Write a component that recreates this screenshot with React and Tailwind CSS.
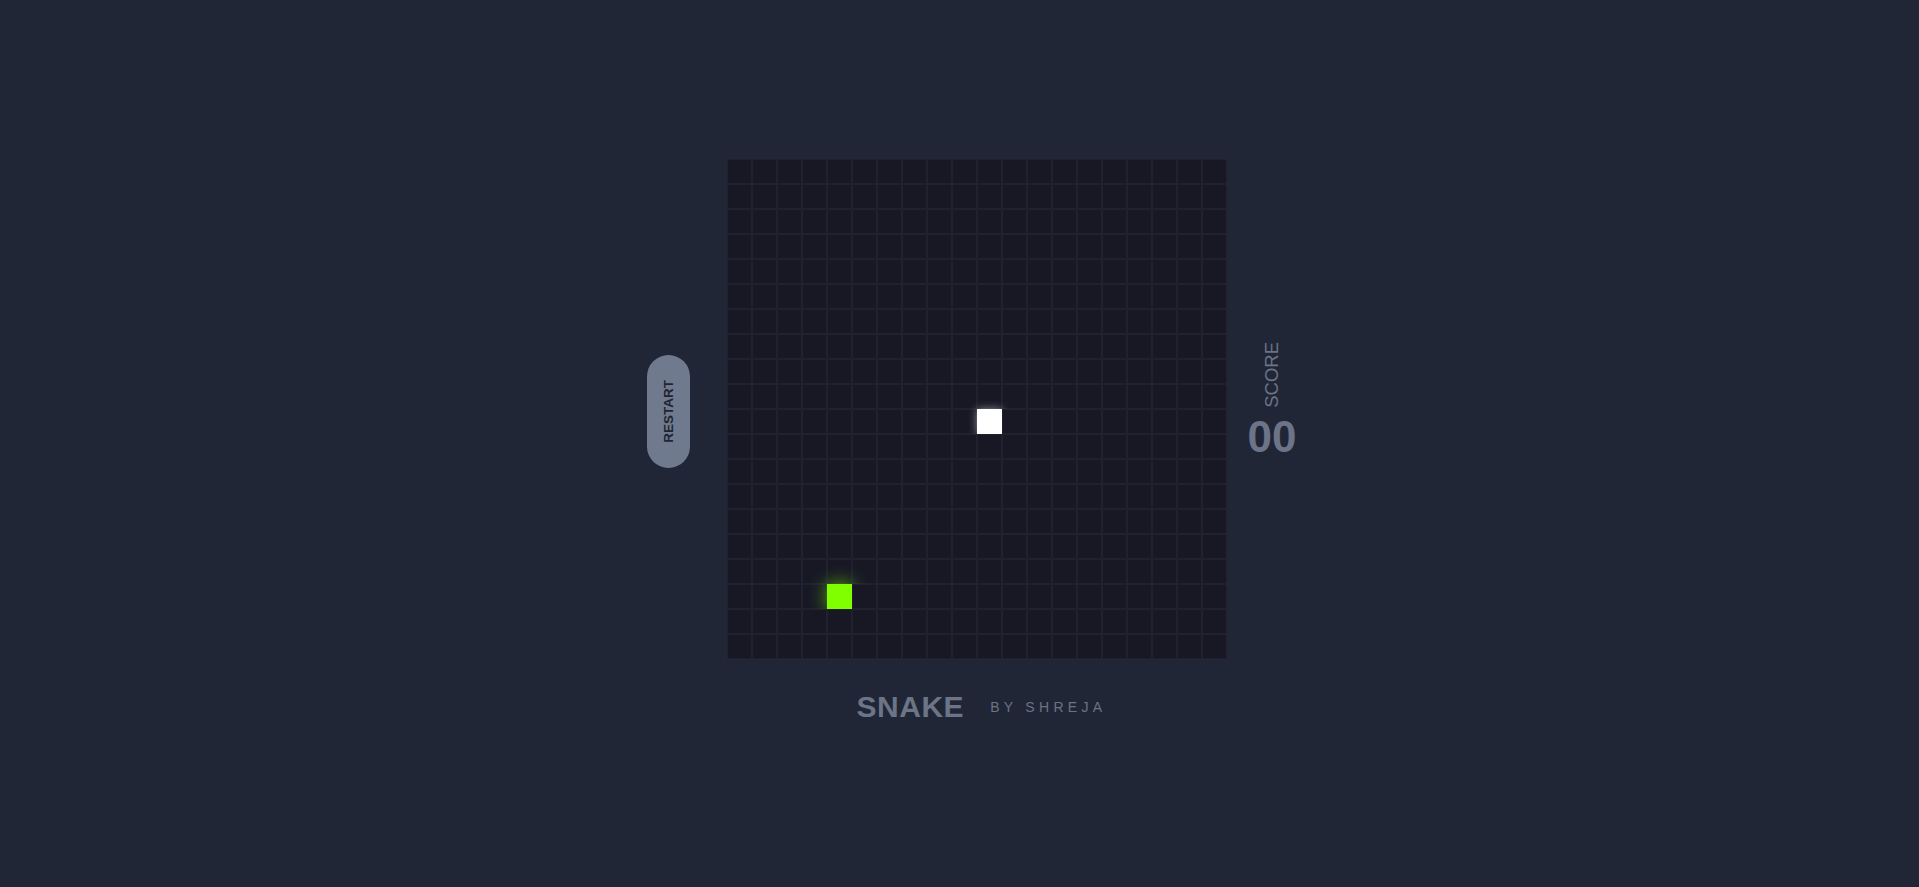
import React from "react";

const COLS = 20;
const ROWS = 20;

function Cell({ type }) {
  if (type === "food") {
    return (
      <div className="w-[25px] h-[25px] bg-white shadow-[0_0_9px_rgba(255,255,255,0.5)]" />
    );
  }
  if (type === "snake") {
    return (
      <div className="w-[25px] h-[25px] bg-[#7fff00] shadow-[0_0_18px_rgba(127,255,0,0.65)]" />
    );
  }
  return <div className="w-[25px] h-[25px] border border-[#20202f] bg-[#181825]" />;
}

export default function App() {
  const cells = [];
  for (let r = 0; r < ROWS; r++) {
    for (let c = 0; c < COLS; c++) {
      let type = "empty";
      if (r === 10 && c === 10) type = "food";
      if (r === 17 && c === 4) type = "snake";
      cells.push(<Cell key={`${r}-${c}`} type={type} />);
    }
  }

  return (
    <div
      className="min-h-screen w-full bg-[#212636] flex items-center justify-center pl-[25px] pb-[5px]"
      style={{ fontFamily: '"Liberation Sans", Arial, Helvetica, sans-serif' }}
    >
      <div className="grid grid-cols-[80px_500px_70px]">
        <div className="self-center justify-self-start mt-[5px]">
          <button className="w-[43px] h-[113px] rounded-full bg-[#707a8e] flex items-center justify-center">
            <span className="[writing-mode:vertical-rl] rotate-180 text-[13.5px] font-bold text-[#1f2433] leading-none">
              RESTART
            </span>
          </button>
        </div>

        <div className="grid grid-cols-[repeat(20,25px)] grid-rows-[repeat(20,25px)] w-[500px] h-[500px] bg-[#181825]">
          {cells}
        </div>

        <div className="self-center justify-self-end w-[50px] flex flex-col items-center mb-[17px]">
          <span className="[writing-mode:vertical-rl] rotate-180 text-[18.5px] text-[#6b7488] leading-none">
            SCORE
          </span>
          <span className="mt-[7px] text-[44px] font-bold text-[#6b7488] leading-none">00</span>
        </div>

        <div />
        <div className="flex items-center justify-center gap-[26px] mt-[32px] h-[32px] pl-[9px]">
          <span className="text-[30px] font-bold text-[#6c7487] leading-[32px] tracking-[0.5px]">SNAKE</span>
          <span className="text-[14px] text-[#6b7385] tracking-[4.3px] leading-none">BY SHREJA</span>
        </div>
        <div />
      </div>
    </div>
  );
}
